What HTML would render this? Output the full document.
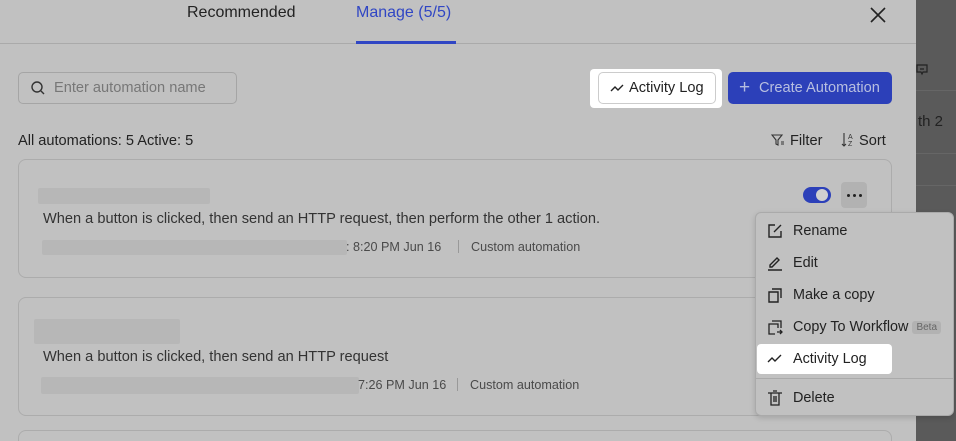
<!DOCTYPE html>
<html><head><meta charset="utf-8"><style>
*{box-sizing:border-box;margin:0;padding:0}
html,body{width:956px;height:441px;overflow:hidden}
body{background:#5a5a5a;font-family:"Liberation Sans",sans-serif;position:relative;color:#2b2b2b}
.a{position:absolute}
.panel{left:0;top:0;width:916px;height:441px;background:#c1c1c1}
.card{border:1px solid #acacac;border-radius:8px;background:#c1c1c1}
.blur{background:#b7b7b7;border-radius:2px}
.t14{font-size:14.6px;color:#333}
.meta{font-size:12.6px;color:#4a4a4a}
.mi{left:767px;font-size:14.4px;color:#222;display:flex;align-items:center;gap:10px}
</style></head><body>
<div class="a panel"></div>
<div class="a" style="left:0;top:43px;width:916px;height:1px;background:#aaa"></div>
<div class="a" style="left:187px;top:4px;font-size:16px;color:#222">Recommended</div>
<div class="a" style="left:356px;top:4px;font-size:16px;color:#3046c4">Manage (5/5)</div>
<div class="a" style="left:356px;top:41px;width:100px;height:3px;background:#3046c4"></div>
<svg class="a" style="left:868px;top:5px" width="20" height="20" viewBox="0 0 20 20"><path d="M3 3L17 17M17 3L3 17" stroke="#222" stroke-width="1.6"/></svg>
<div class="a" style="left:916px;top:90px;width:40px;height:1px;background:#666"></div>
<div class="a" style="left:916px;top:153px;width:40px;height:1px;background:#666"></div>
<div class="a" style="left:916px;top:185px;width:40px;height:1px;background:#666"></div>
<div class="a" style="left:918px;top:113px;font-size:15px;color:#222">th 2</div>
<svg class="a" style="left:914px;top:62px" width="16" height="16" viewBox="0 0 16 16"><path d="M3 3h10v7H9l-1 2-1-2H3z M6 7h4" fill="none" stroke="#222" stroke-width="1.2"/></svg>
<div class="a" style="left:18px;top:72px;width:219px;height:32px;border:1px solid #a5a5a5;border-radius:5px"></div>
<svg class="a" style="left:30px;top:80px" width="16" height="16" viewBox="0 0 16 16"><circle cx="7" cy="7" r="5" fill="none" stroke="#333" stroke-width="1.4"/><path d="M11 11l3 3" stroke="#333" stroke-width="1.4"/></svg>
<div class="a" style="left:54px;top:80px;font-size:14.6px;color:#777">Enter automation name</div>
<div class="a" style="left:590px;top:69px;width:132px;height:39px;background:#fff;border-radius:4px"></div>
<div class="a" style="left:598px;top:72px;width:118px;height:32px;border:1px solid #ccc;border-radius:5px;background:#fff"></div>
<svg class="a" style="left:610px;top:82px" width="14" height="12" viewBox="0 0 14 12"><path d="M1 9l4-4 3 3 5-5" fill="none" stroke="#222" stroke-width="1.4"/></svg>
<div class="a" style="left:629px;top:80px;font-size:14.6px;color:#222">Activity Log</div>
<div class="a" style="left:728px;top:72px;width:164px;height:32px;background:#2c40b9;border-radius:5px"></div>
<div class="a" style="left:739px;top:78px;font-size:19px;color:#b4bce0;line-height:20px">+</div>
<div class="a" style="left:759px;top:80px;font-size:14.6px;color:#b8bfe0">Create Automation</div>
<div class="a" style="left:18px;top:133px;font-size:14.6px;color:#222">All automations: 5 Active: 5</div>
<svg class="a" style="left:771px;top:133px" width="14" height="14" viewBox="0 0 14 14"><path d="M1 2h10L7 7v5L5 11V7z M10 9h3M10 11h3" fill="none" stroke="#333" stroke-width="1.1"/></svg>
<div class="a" style="left:790px;top:133px;font-size:14.6px;color:#222">Filter</div>
<svg class="a" style="left:841px;top:132px" width="14" height="16" viewBox="0 0 14 16"><path d="M3 1v13M1 12l2 2 2-2" fill="none" stroke="#333" stroke-width="1.1"/><text x="7" y="7" font-size="7" font-family="Liberation Sans" fill="#333">A</text><text x="7" y="14" font-size="7" font-family="Liberation Sans" fill="#333">Z</text></svg>
<div class="a" style="left:859px;top:133px;font-size:14.6px;color:#222">Sort</div>
<div class="a card" style="left:18px;top:159px;width:874px;height:119px"></div>
<div class="a blur" style="left:38px;top:188px;width:172px;height:16px"></div>
<div class="a t14" style="left:43px;top:211px">When a button is clicked, then send an HTTP request, then perform the other 1 action.</div>
<div class="a blur" style="left:42px;top:240px;width:305px;height:15px"></div>
<div class="a meta" style="left:346px;top:240px">: 8:20 PM Jun 16</div>
<div class="a" style="left:458px;top:240px;width:1px;height:13px;background:#999"></div>
<div class="a meta" style="left:471px;top:240px">Custom automation</div>
<div class="a" style="left:803px;top:187px;width:28px;height:16px;border-radius:8px;background:#2c40b9"></div>
<div class="a" style="left:816px;top:189px;width:12px;height:12px;border-radius:6px;background:#d0d0d0"></div>
<div class="a" style="left:841px;top:182px;width:26px;height:26px;border-radius:4px;background:#b2b2b2"></div>
<div class="a" style="left:847px;top:194px;width:3px;height:3px;border-radius:2px;background:#222;box-shadow:6px 0 #222,12px 0 #222"></div>
<div class="a card" style="left:18px;top:297px;width:874px;height:119px"></div>
<div class="a blur" style="left:34px;top:319px;width:146px;height:25px"></div>
<div class="a t14" style="left:43px;top:349px">When a button is clicked, then send an HTTP request</div>
<div class="a blur" style="left:41px;top:377px;width:318px;height:17px"></div>
<div class="a meta" style="left:358px;top:378px">7:26 PM Jun 16</div>
<div class="a" style="left:457px;top:378px;width:1px;height:13px;background:#999"></div>
<div class="a meta" style="left:470px;top:378px">Custom automation</div>
<div class="a card" style="left:18px;top:430px;width:874px;height:11px;border-bottom:none;border-radius:8px 8px 0 0"></div>
<div class="a" style="left:755px;top:212px;width:199px;height:204px;background:#c1c1c1;border:1px solid #aaa;border-radius:6px;box-shadow:0 2px 6px rgba(0,0,0,.15)"></div>
<div class="a" style="left:757px;top:344px;width:135px;height:30px;background:#fff;border-radius:4px"></div>
<div class="a" style="left:756px;top:378px;width:197px;height:1px;background:#aaa"></div>
<div class="a mi" style="top:223px"><svg width="16" height="16" viewBox="0 0 16 16"><path d="M8 2H2v12h12V8M7 9l7-7" fill="none" stroke="#222" stroke-width="1.4"/></svg>Rename</div>
<div class="a mi" style="top:255px"><svg width="16" height="16" viewBox="0 0 16 16"><path d="M3 10l7-7 2 2-7 7H3zM1 15h14" fill="none" stroke="#222" stroke-width="1.4"/></svg>Edit</div>
<div class="a mi" style="top:287px"><svg width="16" height="16" viewBox="0 0 16 16"><path d="M2 5h9v10H2zM5 2h9v9" fill="none" stroke="#222" stroke-width="1.4"/></svg>Make a copy</div>
<div class="a mi" style="top:319px"><svg width="16" height="16" viewBox="0 0 16 16"><path d="M8 15H2V5h9v4M5 2h9v7M10 13h5M13 11l2 2-2 2" fill="none" stroke="#222" stroke-width="1.3"/></svg>Copy To Workflow<span style="margin-left:-6px;font-size:10px;color:#666;background:#b2b2b2;padding:1px 4px;border-radius:3px">Beta</span></div>
<div class="a mi" style="top:351px"><svg width="16" height="16" viewBox="0 0 16 16"><path d="M1 11l4-4 3 3 6-6" fill="none" stroke="#222" stroke-width="1.4"/></svg>Activity Log</div>
<div class="a mi" style="top:390px"><svg width="16" height="16" viewBox="0 0 16 16"><path d="M1 3h14M4 3v12h8V3M6 1h4M7 6v6M9 6v6" fill="none" stroke="#222" stroke-width="1.3"/></svg>Delete</div>
</body></html>
